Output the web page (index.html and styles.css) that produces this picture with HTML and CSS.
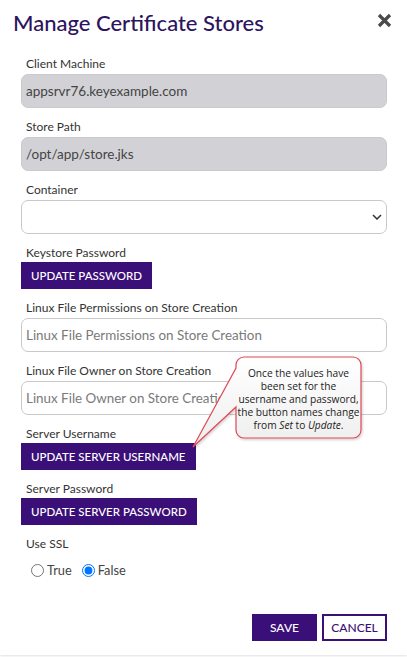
FILE: index.html
```html
<!DOCTYPE html>
<html lang="en">
<head>
<meta charset="utf-8">
<title>Manage Certificate Stores</title>
<link rel="stylesheet" href="styles.css">
</head>
<body>
<div class="dialog">
  <header class="header">
    <h1 class="title">Manage Certificate Stores</h1>
    <button class="close" aria-label="Close">
      <svg width="15" height="15" viewBox="0 0 15 15"><path d="M2 2 L13 13 M13 2 L2 13" stroke="#4a4a4a" stroke-width="3.2" stroke-linecap="butt"/></svg>
    </button>
  </header>

  <div class="form">
    <div class="field">
      <div class="label">Client Machine</div>
      <div class="input readonly">appsrvr76.keyexample.com</div>
    </div>
    <div class="field">
      <div class="label">Store Path</div>
      <div class="input readonly">/opt/app/store.jks</div>
    </div>
    <div class="field">
      <div class="label">Container</div>
      <div class="input select">
        <svg class="chev" width="10" height="6" viewBox="0 0 10 6"><path d="M1 1 L5 5 L9 1" fill="none" stroke="#333" stroke-width="1.5"/></svg>
      </div>
    </div>
    <div class="field btnfield">
      <div class="label">Keystore Password</div>
      <button class="btn primary">UPDATE PASSWORD</button>
    </div>
    <div class="field">
      <div class="label">Linux File Permissions on Store Creation</div>
      <div class="input placeholder">Linux File Permissions on Store Creation</div>
    </div>
    <div class="field">
      <div class="label">Linux File Owner on Store Creation</div>
      <div class="input placeholder">Linux File Owner on Store Creation</div>
    </div>
    <div class="field btnfield">
      <div class="label">Server Username</div>
      <button class="btn primary">UPDATE SERVER USERNAME</button>
    </div>
    <div class="field btnfield">
      <div class="label">Server Password</div>
      <button class="btn primary">UPDATE SERVER PASSWORD</button>
    </div>
    <div class="field">
      <div class="label">Use SSL</div>
      <div class="radios">
        <label class="radio"><input type="radio" name="ssl"> True</label>
        <label class="radio"><input type="radio" name="ssl" checked> False</label>
      </div>
    </div>
  </div>

  <footer class="footer">
    <button class="btn primary action">SAVE</button>
    <button class="btn outline action">CANCEL</button>
  </footer>

  <div class="callout">
    <svg class="callout-shape" width="180" height="100" viewBox="190 352 180 100">
      <defs>
        <linearGradient id="cg" x1="0" y1="0" x2="0" y2="1">
          <stop offset="0" stop-color="#ffffff"/>
          <stop offset="1" stop-color="#eeeeee"/>
        </linearGradient>
        <filter id="sh" x="-10%" y="-10%" width="130%" height="130%">
          <feDropShadow dx="1" dy="1.5" stdDeviation="1.2" flood-color="#000" flood-opacity="0.18"/>
        </filter>
      </defs>
      <path d="M244 357 H353 A8 8 0 0 1 361 365 V430 A8 8 0 0 1 353 438 H244 A8 8 0 0 1 236 430 V407 L193 447 L236 368 V365 A8 8 0 0 1 244 357 Z" fill="url(#cg)" stroke="#dd4a55" stroke-width="1.2" filter="url(#sh)"/>
    </svg>
    <p class="callout-text"><span class="line">Once the values have</span><span class="line">been set for the</span><span class="line">username and password,</span><span class="line">the button names change</span><span class="line">from <i>Set</i> to <i>Update</i>.</span></p>
  </div>
</div>
</body>
</html>
```

FILE: styles.css
```css
* { box-sizing: border-box; }
html, body { margin: 0; padding: 0; background: #fff; }
body {
  font-family: Lato, "Open Sans", Arial, sans-serif;
  color: #333;
  width: 407px;
  height: 657px;
  overflow: hidden;
}
.dialog {
  position: relative;
  width: 407px;
  height: 655px;
  padding: 0 20px 0 21px;
  box-shadow: 0 1px 2px rgba(0, 0, 0, 0.12);
}
.header {
  display: flex;
  justify-content: space-between;
  align-items: flex-start;
  padding-top: 9px;
  height: 56px;
}
.title {
  margin: 0 0 0 -8px;
  font-size: 22px;
  line-height: 27px;
  font-weight: 500;
  color: #2d1460;
}
.close {
  background: none;
  border: 0;
  padding: 0;
  margin: 4px -5px 0 0;
  width: 15px;
  height: 15px;
}
.close svg { display: block; }
.form {
  display: flex;
  flex-direction: column;
  gap: 11px;
}
.field { display: flex; flex-direction: column; }
.label {
  font-size: 12px;
  line-height: 16px;
  color: #333;
  padding-left: 5px;
  margin-bottom: 2px;
}
.btnfield .label { margin-bottom: 1px; }
.input {
  height: 34px;
  width: 366px;
  border: 1px solid #c9c9cc;
  border-radius: 7px;
  padding: 0 4px;
  display: flex;
  align-items: center;
  font-size: 13.5px;
  color: #444;
}
.readonly {
  background: #d2d2d6;
  border-color: #cacace;
}
.placeholder { color: #7a7a7a; font-size: 13.4px; }
.select { justify-content: flex-end; padding-right: 4px; }
.chev { display: block; }
.btn {
  font-family: inherit;
  font-size: 11.5px;
  font-weight: 500;
  height: 27px;
  border: 0;
  padding: 0 10px;
  cursor: pointer;
}
.primary {
  background: #3b0f78;
  color: #fff;
  align-self: flex-start;
}
.radios {
  display: flex;
  align-items: center;
  gap: 7px;
  padding-left: 7px;
  margin-top: 8px;
}
.radio {
  display: flex;
  align-items: center;
  font-size: 12.8px;
  color: #444;
  gap: 1px;
}
.radio input { margin: 0 2px 0 3px; width: 13px; height: 13px; }
.footer {
  display: flex;
  justify-content: flex-end;
  gap: 5px;
  margin-top: 36px;
}
.action { width: 65px; padding: 0; font-size: 12px; }
.outline {
  background: #fff;
  color: #3b0f78;
  border: 2px solid #3b0f78;
}
.callout {
  position: absolute;
  left: 190px;
  top: 352px;
  width: 180px;
  height: 100px;
}
.callout-shape { position: absolute; left: 0; top: 0; }
.callout-text {
  position: absolute;
  margin: 0;
  left: 46px;
  top: 15px;
  width: 125px;
  text-align: center;
  font-family: "Open Sans", Lato, sans-serif;
  font-size: 10.2px;
  line-height: 13px;
  color: #222;
}
.callout-text .line { display: block; white-space: nowrap; }
```
